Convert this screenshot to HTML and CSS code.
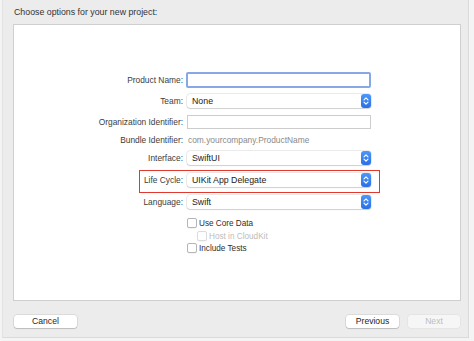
FILE: index.html
```html
<!DOCTYPE html>
<html>
<head>
<meta charset="utf-8">
<link rel="stylesheet" href="styles.css">
</head>
<body>
<div class="window">
  <div class="title">Choose options for your new project:</div>
  <div class="panel">
    <div class="form">
      <div class="row r1">
        <span class="label">Product Name:</span>
        <div class="field focused"></div>
      </div>
      <div class="row r2">
        <span class="label">Team:</span>
        <div class="popup"><span class="ptext">None</span><span class="stepper"><svg viewBox="0 0 10 14" width="10" height="14"><path d="M3 5.8 L5 3.8 L7 5.8 M3 8.2 L5 10.2 L7 8.2" fill="none" stroke="#fff" stroke-width="1.1" stroke-linecap="round" stroke-linejoin="round"/></svg></span></div>
      </div>
      <div class="row r3">
        <span class="label">Organization Identifier:</span>
        <div class="field"></div>
      </div>
      <div class="row r4">
        <span class="label">Bundle Identifier:</span>
        <span class="value">com.yourcompany.ProductName</span>
      </div>
      <div class="row r5">
        <span class="label">Interface:</span>
        <div class="popup"><span class="ptext">SwiftUI</span><span class="stepper"><svg viewBox="0 0 10 14" width="10" height="14"><path d="M3 5.8 L5 3.8 L7 5.8 M3 8.2 L5 10.2 L7 8.2" fill="none" stroke="#fff" stroke-width="1.1" stroke-linecap="round" stroke-linejoin="round"/></svg></span></div>
      </div>
      <div class="row r6 highlighted">
        <span class="label">Life Cycle:</span>
        <div class="popup"><span class="ptext">UIKit App Delegate</span><span class="stepper"><svg viewBox="0 0 10 14" width="10" height="14"><path d="M3 5.8 L5 3.8 L7 5.8 M3 8.2 L5 10.2 L7 8.2" fill="none" stroke="#fff" stroke-width="1.1" stroke-linecap="round" stroke-linejoin="round"/></svg></span></div>
      </div>
      <div class="row r7">
        <span class="label">Language:</span>
        <div class="popup"><span class="ptext">Swift</span><span class="stepper"><svg viewBox="0 0 10 14" width="10" height="14"><path d="M3 5.8 L5 3.8 L7 5.8 M3 8.2 L5 10.2 L7 8.2" fill="none" stroke="#fff" stroke-width="1.1" stroke-linecap="round" stroke-linejoin="round"/></svg></span></div>
      </div>
      <div class="row check c1">
        <span></span>
        <label class="cb"><span class="box"></span><span>Use Core Data</span></label>
      </div>
      <div class="row check c2">
        <span></span>
        <label class="cb sub disabled"><span class="box"></span><span>Host in CloudKit</span></label>
      </div>
      <div class="row check c3">
        <span></span>
        <label class="cb"><span class="box"></span><span>Include Tests</span></label>
      </div>
    </div>
  </div>
  <div class="footer">
    <button class="btn cancel">Cancel</button>
    <div class="spacer"></div>
    <button class="btn prev">Previous</button>
    <button class="btn next" disabled>Next</button>
  </div>
</div>
</body>
</html>
```

FILE: styles.css
```css
* { box-sizing: border-box; }

html, body {
  margin: 0;
  padding: 0;
}

body {
  width: 474px;
  height: 341px;
  background: #f4f4f4;
  font-family: "Liberation Sans", Arial, sans-serif;
  color: #3a3a3a;
  overflow: hidden;
}

.window {
  margin-left: 2px;
  width: 467px;
  height: 338px;
  background: #ececec;
  border-left: 1px solid #e2e2e2;
  border-right: 1px solid #dadada;
  border-bottom: 1px solid #dadada;
  display: flex;
  flex-direction: column;
}

.title {
  height: 24px;
  line-height: 24px;
  padding-left: 11px;
  font-size: 8.8px;
  color: #333;
}

.panel {
  margin: 0 7px 0 10px;
  height: 277px;
  background: #fff;
  border: 1px solid #cfcfcf;
}

.form {
  padding-top: 47px;
  display: flex;
  flex-direction: column;
}

.row {
  display: grid;
  grid-template-columns: 169px 185px;
  column-gap: 3px;
  align-items: center;
  height: 14px;
  position: relative;
}

.r1 { height: 16px; }
.r2 { margin-top: 6px; }
.r3 { margin-top: 7px; }
.r4 { margin-top: 4px; }
.r5 { margin-top: 4px; }
.r6 { margin-top: 8px; }
.r7 { margin-top: 8px; }
.c1 { margin-top: 9px; height: 10px; }
.c2 { margin-top: 3px; height: 10px; }
.c3 { margin-top: 2px; height: 10px; }

.label {
  text-align: right;
  font-size: 8.4px;
  color: #3c3c3c;
  white-space: nowrap;
}

.value {
  font-size: 8.4px;
  color: #8a8a8a;
  padding-left: 2px;
}

.field {
  height: 14px;
  background: #fff;
  border: 1px solid #cdcdcd;
  margin-left: 1px;
  width: 184px;
}

.field.focused {
  height: 16px;
  margin-left: 0;
  width: 185px;
  border: 2px solid #86a9e6;
  border-radius: 2px;
}

.popup {
  height: 14px;
  margin-left: 1px;
  width: 184px;
  background: #fff;
  border-radius: 3px;
  box-shadow: 0 0 0 0.5px rgba(0, 0, 0, 0.16), 0 1px 1px rgba(0, 0, 0, 0.12);
  display: flex;
  align-items: center;
  justify-content: space-between;
}

.ptext {
  padding-left: 5px;
  font-size: 8.8px;
  color: #222;
}

.stepper {
  width: 10px;
  height: 14px;
  border-radius: 3px;
  background: linear-gradient(#4c98f8, #2a6fe6);
  display: flex;
}

.highlighted::after {
  content: "";
  position: absolute;
  left: 125px;
  top: -3px;
  width: 239px;
  height: 21px;
  border: 1.5px solid #e0392d;
}

.cb {
  display: flex;
  align-items: center;
  gap: 2px;
  font-size: 8.2px;
  color: #2e2e2e;
  margin-left: 1px;
}

.box {
  width: 10px;
  height: 10px;
  border: 1px solid #b5b5b5;
  border-radius: 2px;
  background: #fff;
  box-shadow: 0 0.5px 0.5px rgba(0, 0, 0, 0.08);
}

.cb.sub { margin-left: 11px; }

.cb.disabled { color: #bcbcbc; }
.cb.disabled .box { border-color: #dcdcdc; }

.footer {
  display: flex;
  align-items: flex-start;
  padding: 14px 8px 0 11px;
  gap: 9px;
}

.spacer { flex: 1; }

.btn {
  height: 13px;
  padding: 0;
  border: none;
  border-radius: 3px;
  background: #fff;
  box-shadow: 0 0 0 0.5px rgba(0, 0, 0, 0.14), 0 1px 1px rgba(0, 0, 0, 0.14);
  font-family: "Liberation Sans", Arial, sans-serif;
  font-size: 8.6px;
  color: #262626;
  line-height: 13px;
}

.cancel { width: 63px; }
.prev { width: 53px; }
.next {
  width: 52px;
  background: #f6f6f6;
  color: #bdbdbd;
  box-shadow: 0 0 0 0.5px rgba(0, 0, 0, 0.06);
}
```
